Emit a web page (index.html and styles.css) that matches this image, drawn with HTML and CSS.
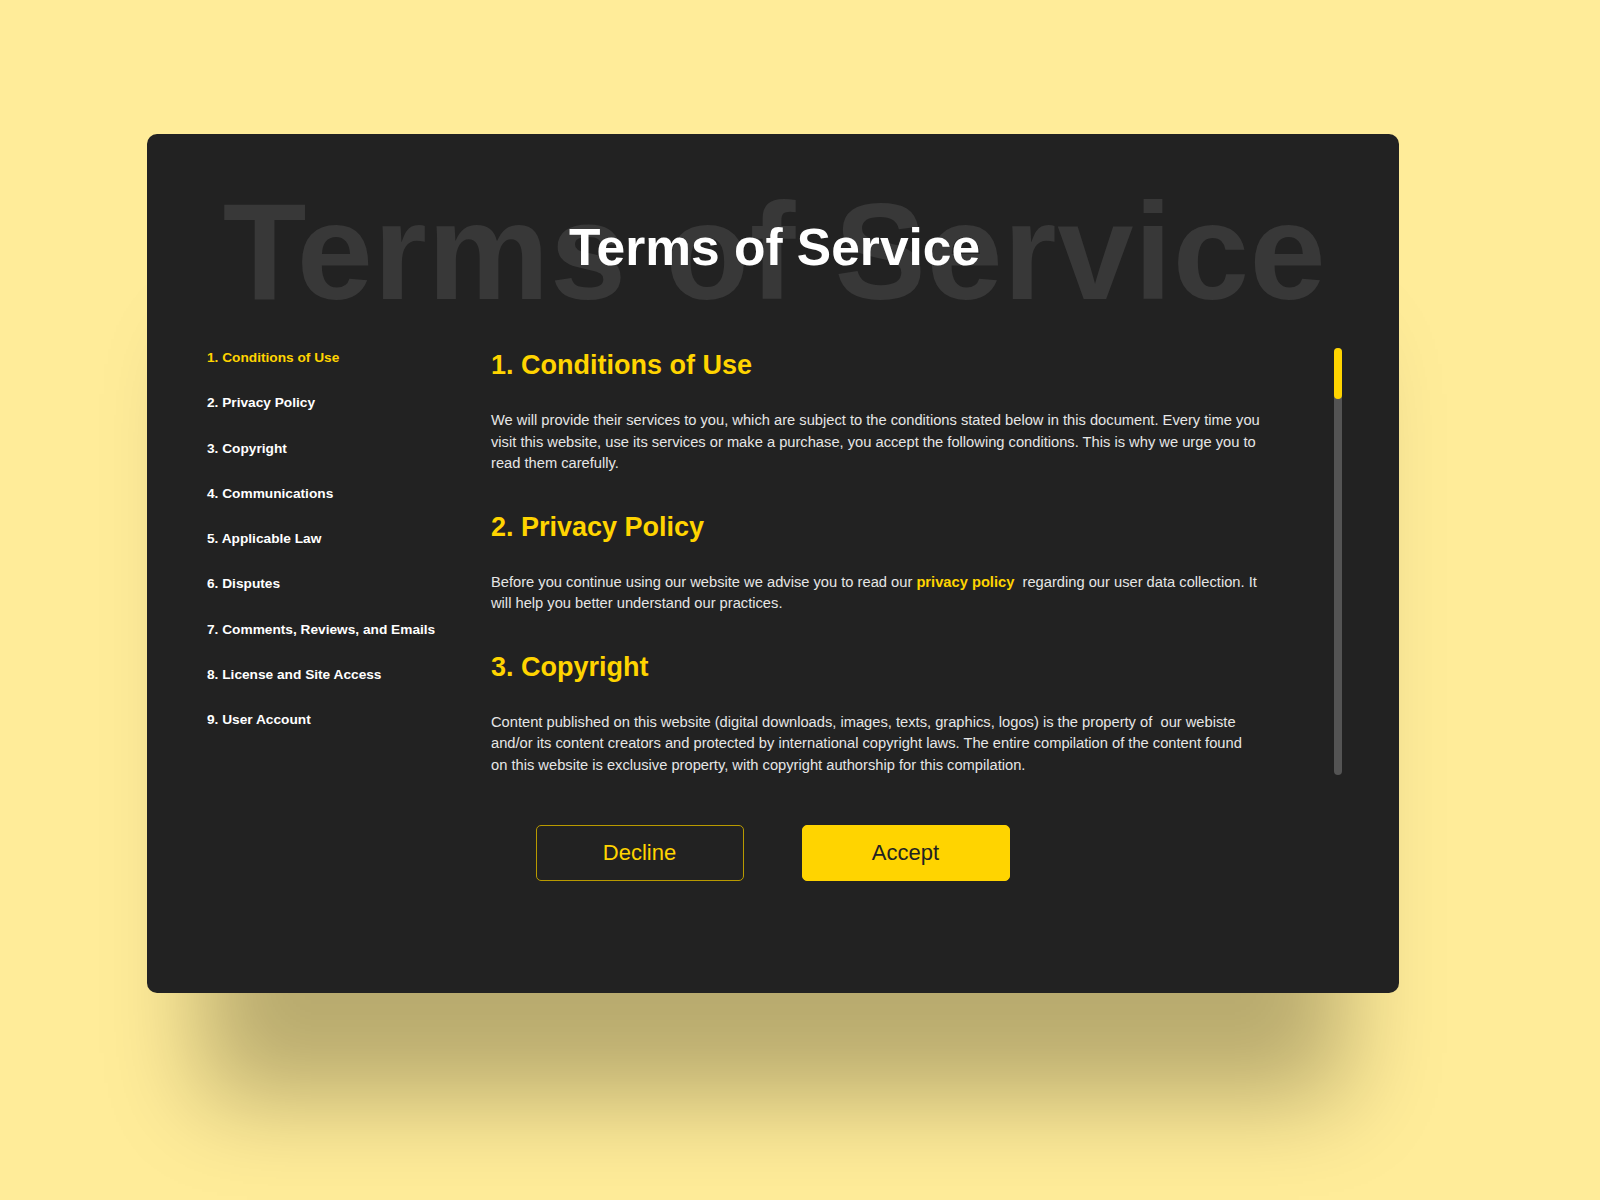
FILE: index.html
```html
<!DOCTYPE html>
<html lang="en">
<head>
<meta charset="utf-8">
<title>Terms of Service</title>
<link rel="stylesheet" href="styles.css">
</head>
<body>
  <div class="card">
    <header class="hero">
      <div class="hero-bg" aria-hidden="true">Terms of Service</div>
      <h1 class="hero-title">Terms of Service</h1>
    </header>

    <div class="main">
      <nav class="toc">
        <a class="toc-item active" href="#">1. Conditions of Use</a>
        <a class="toc-item" href="#">2. Privacy Policy</a>
        <a class="toc-item" href="#">3. Copyright</a>
        <a class="toc-item" href="#">4. Communications</a>
        <a class="toc-item" href="#">5. Applicable Law</a>
        <a class="toc-item" href="#">6. Disputes</a>
        <a class="toc-item" href="#">7. Comments, Reviews, and Emails</a>
        <a class="toc-item" href="#">8. License and Site Access</a>
        <a class="toc-item" href="#">9. User Account</a>
      </nav>

      <div class="content">
        <section class="section">
          <h2>1. Conditions of Use</h2>
          <p>We will provide their services to you, which are subject to the conditions stated below in this document. Every time you<br>visit this website, use its services or make a purchase, you accept the following conditions. This is why we urge you to<br>read them carefully.</p>
        </section>
        <section class="section">
          <h2>2. Privacy Policy</h2>
          <p>Before you continue using our website we advise you to read our <a class="link" href="#">privacy policy</a>&nbsp; regarding our user data collection. It<br>will help you better understand our practices.</p>
        </section>
        <section class="section">
          <h2>3. Copyright</h2>
          <p>Content published on this website (digital downloads, images, texts, graphics, logos) is the property of &nbsp;our webiste<br>and/or its content creators and protected by international copyright laws. The entire compilation of the content found<br>on this website is exclusive property, with copyright authorship for this compilation.</p>
        </section>
      </div>

      <div class="scroll"><div class="thumb"></div></div>
    </div>

    <div class="actions">
      <button class="btn btn-outline" type="button">Decline</button>
      <button class="btn btn-solid" type="button">Accept</button>
    </div>
  </div>
</body>
</html>
```

FILE: styles.css
```css
html, body {
  margin: 0;
}

body {
  background: #ffec99;
  padding: 134px 0 0 147px;
  min-height: 1200px;
  box-sizing: border-box;
  font-family: "Liberation Sans", Arial, sans-serif;
  overflow: hidden;
}

.card {
  width: 1252px;
  box-sizing: border-box;
  background: #222222;
  border-radius: 10px;
  padding: 49px 57px 112px 60px;
  box-shadow: 0 160px 90px -55px rgba(0, 0, 0, 0.28);
}

/* header */
.hero {
  display: grid;
  justify-items: center;
  align-items: start;
  height: 137px;
}

.hero > * {
  grid-area: 1 / 1;
}

.hero-bg {
  font-size: 137px;
  line-height: 137px;
  font-weight: 700;
  color: #383838;
  white-space: nowrap;
  letter-spacing: 0.6px;
}

.hero-title {
  margin: 39px 0 0;
  font-size: 51.5px;
  line-height: 51.5px;
  font-weight: 700;
  color: #ffffff;
  white-space: nowrap;
}

/* main */
.main {
  display: flex;
  margin-top: 28px;
}

.toc {
  width: 284px;
  flex: none;
  display: flex;
  flex-direction: column;
  gap: 25.25px;
}

.toc-item {
  font-size: 13.7px;
  line-height: 20px;
  font-weight: 700;
  color: #ffffff;
  text-decoration: none;
  white-space: nowrap;
}

.toc-item.active {
  color: #ffd400;
}

.content {
  flex: 1;
  min-width: 0;
}

.section h2 {
  margin: 0 0 27px;
  font-size: 27px;
  line-height: 35px;
  font-weight: 700;
  color: #ffd400;
}

.section p {
  margin: 0;
  max-width: 820px;
  font-size: 14.7px;
  line-height: 21.5px;
  color: #e6e6e6;
  white-space: nowrap;
}

.section + .section {
  margin-top: 35px;
}

.link {
  color: #ffd400;
  font-weight: 700;
  text-decoration: none;
}

.scroll {
  width: 8px;
  height: 427px;
  flex: none;
  border-radius: 4px;
  background: #545454;
}

.thumb {
  height: 51px;
  border-radius: 4px;
  background: #ffd400;
}

/* actions */
.actions {
  display: flex;
  justify-content: center;
  gap: 58px;
  margin-top: 49px;
  padding-right: 4px;
}

.btn {
  width: 208px;
  height: 56px;
  box-sizing: border-box;
  border-radius: 5px;
  font-family: inherit;
  font-size: 22px;
  cursor: pointer;
}

.btn-outline {
  background: transparent;
  border: 1px solid #b89a00;
  color: #ffd400;
}

.btn-solid {
  background: #ffd400;
  border: 1px solid #ffd400;
  color: #222222;
}
```
